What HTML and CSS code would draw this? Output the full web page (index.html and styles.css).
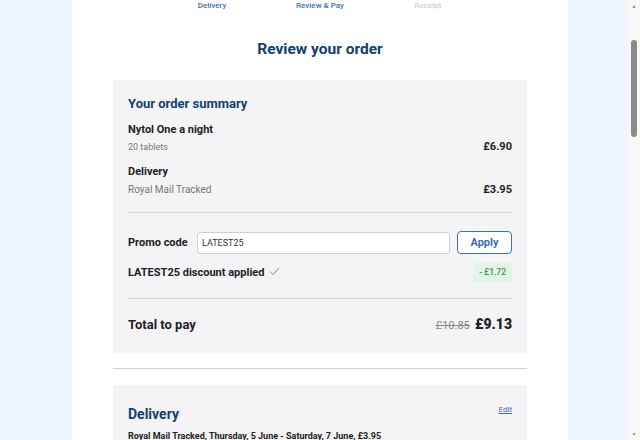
FILE: index.html
```html
<!DOCTYPE html>
<html lang="en">
<head>
    <meta charset="UTF-8">
    <meta name="viewport" content="width=device-width, initial-scale=1.0">
    <title>Review your order</title>
    <link rel="stylesheet" href="styles.css">
</head>
<body>
    <div class="page">
        <div class="column">
            <nav class="steps">
                <span class="step done">Delivery</span>
                <span class="step done">Review &amp; Pay</span>
                <span class="step todo">Receipt</span>
            </nav>
            <h1>Review your order</h1>

            <section class="card summary">
                <h2>Your order summary</h2>
                <div class="item">
                    <div class="item-name">Nytol One a night</div>
                    <div class="row">
                        <span class="sub small">20 tablets</span>
                        <span class="price">£6.90</span>
                    </div>
                </div>
                <div class="item">
                    <div class="item-name">Delivery</div>
                    <div class="row">
                        <span class="sub">Royal Mail Tracked</span>
                        <span class="price">£3.95</span>
                    </div>
                </div>
                <hr class="first">
                <form class="promo">
                    <label for="promo">Promo code</label>
                    <input type="text" id="promo" value="LATEST25">
                    <button type="button">Apply</button>
                </form>
                <div class="row discount">
                    <span class="applied">LATEST25 discount applied
                        <svg width="11" height="9" viewBox="0 0 11 9"><path d="M1 4.5 L4 7.5 L10 1" fill="none" stroke="#4caf6a" stroke-width="1"/></svg>
                    </span>
                    <span class="badge">- £1.72</span>
                </div>
                <hr>
                <div class="row total">
                    <span>Total to pay</span>
                    <span class="amounts"><s>£10.85</s> <b>£9.13</b></span>
                </div>
            </section>

            <hr class="split">

            <section class="card delivery">
                <div class="row">
                    <h2>Delivery</h2>
                    <a href="#">Edit</a>
                </div>
                <p>Royal Mail Tracked, Thursday, 5 June - Saturday, 7 June, £3.95</p>
            </section>
        </div>
    </div>
    <div class="scrollbar">
        <span class="arrow">&#9650;</span>
        <div class="track"><div class="thumb"></div></div>
        <span class="arrow">&#9660;</span>
    </div>
</body>
</html>
```

FILE: styles.css
```css
body {
    margin: 0;
    height: 440px;
    overflow: hidden;
    display: flex;
    font-family: Roboto, "Liberation Sans", sans-serif;
    color: #222;
}
.page {
    flex: 1;
    background-color: #eef5fd;
}
.column {
    width: 496px;
    height: 440px;
    margin-left: 72px;
    background-color: #fff;
    overflow: hidden;
}
.steps {
    display: flex;
    justify-content: center;
    padding-top: 1px;
    font-size: 8px;
    font-weight: 500;
    line-height: 10px;
}
.step {
    width: 108px;
    text-align: center;
}
.step.done {
    color: #3b6fb6;
}
.step.todo {
    color: #cfcfcf;
}
h1 {
    margin: 28px 0 0;
    text-align: center;
    font-size: 15.5px;
    line-height: 20px;
    color: #123f6e;
}
.card {
    margin: 21px 41px 0;
    background-color: #f4f4f6;
    padding: 15px 15px 18px;
}
.card h2 {
    margin: 0;
    font-size: 13px;
    line-height: 18px;
    color: #123f6e;
}
.row {
    display: flex;
    justify-content: space-between;
    align-items: center;
}
.item {
    margin-top: 10px;
}
.item + .item {
    margin-top: 11px;
}
.item-name {
    font-size: 11px;
    font-weight: 700;
    line-height: 14px;
}
.item .row {
    margin-top: 3px;
    line-height: 14px;
}
.item + .item .row {
    margin-top: 4px;
}
.sub {
    font-size: 10px;
    color: #777;
}
.sub.small {
    font-size: 9px;
}
.price {
    font-size: 11px;
    font-weight: 700;
}
.card hr {
    border: none;
    border-top: 1px solid #d6d6e0;
    margin: 16px 0;
}
.card hr.first {
    margin-top: 15px;
}
.promo {
    display: flex;
    align-items: center;
    margin-top: 18px;
}
.promo label {
    font-size: 11px;
    font-weight: 700;
    width: 69px;
}
.promo input {
    width: 253px;
    height: 22px;
    box-sizing: border-box;
    border: 1px solid #cfcfcf;
    border-radius: 3px;
    padding: 0 4px;
    font-family: Roboto, "Liberation Sans", sans-serif;
    font-size: 9px;
    color: #333;
    background-color: #fff;
}
.promo button {
    margin-left: auto;
    width: 55px;
    height: 23px;
    border: 1.5px solid #3b6fb6;
    border-radius: 4px;
    background-color: #fff;
    color: #3b6fb6;
    font-family: Roboto, "Liberation Sans", sans-serif;
    font-size: 11px;
    font-weight: 700;
}
.discount {
    margin-top: 9px;
}
.applied {
    font-size: 11px;
    font-weight: 700;
}
.applied svg {
    margin-left: 2px;
}
.badge {
    background-color: #e4f3e8;
    color: #2e9a52;
    font-size: 8.5px;
    font-weight: 500;
    padding: 5px 6px;
    line-height: 9px;
}
.total {
    font-size: 13px;
    font-weight: 700;
    line-height: 18px;
}
.amounts s {
    font-size: 11px;
    font-weight: 400;
    color: #888;
}
.amounts b {
    font-size: 14px;
    margin-left: 2px;
}
hr.split {
    border: none;
    border-top: 1px solid #cfcfcf;
    margin: 15px 41px 0;
}
.card.delivery {
    margin-top: 16px;
    padding-top: 20px;
}
.delivery h2 {
    font-size: 14px;
}
.delivery a {
    font-size: 8px;
    color: #3b6fb6;
    align-self: flex-start;
    margin-top: 0;
}
.delivery p {
    margin: 7px 0 0;
    font-size: 9px;
    font-weight: 700;
    line-height: 12px;
}
.scrollbar {
    width: 12px;
    background-color: #f8f8f8;
    display: flex;
    flex-direction: column;
    align-items: center;
}
.arrow {
    font-size: 5px;
    color: #8a8a8a;
    line-height: 12px;
}
.track {
    flex: 1;
}
.thumb {
    width: 6px;
    height: 97px;
    margin-top: 28px;
    border-radius: 3px;
    background-color: #8a8a8a;
}
```
